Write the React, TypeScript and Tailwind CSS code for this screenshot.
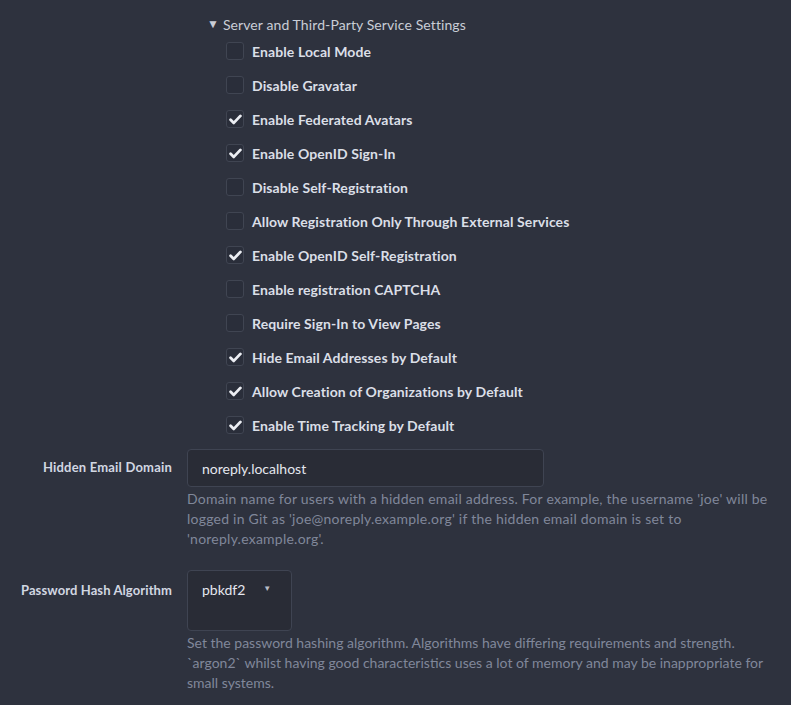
import React from "react";

const items: [string, boolean][] = [
  ["Enable Local Mode", false],
  ["Disable Gravatar", false],
  ["Enable Federated Avatars", true],
  ["Enable OpenID Sign-In", true],
  ["Disable Self-Registration", false],
  ["Allow Registration Only Through External Services", false],
  ["Enable OpenID Self-Registration", true],
  ["Enable registration CAPTCHA", false],
  ["Require Sign-In to View Pages", false],
  ["Hide Email Addresses by Default", true],
  ["Allow Creation of Organizations by Default", true],
  ["Enable Time Tracking by Default", true],
];

function Check({ on }: { on: boolean }) {
  return (
    <div className="w-[18px] h-[18px] rounded-[3px] border border-[#404552] bg-[#2a2e3a] flex items-center justify-center">
      {on && (
        <svg width="13" height="11" viewBox="0 0 13 11">
          <path d="M1.6 5.8 L4.8 8.9 L11.4 1.9" fill="none" stroke="#eceef3" strokeWidth="2.8" strokeLinecap="round" strokeLinejoin="round" />
        </svg>
      )}
    </div>
  );
}

export default function App() {
  return (
    <div
      className="w-[791px] h-[705px] bg-[#2e323e] overflow-hidden text-[#d2d6de]"
      style={{ fontFamily: "'Segoe UI', Lato, 'Noto Sans', sans-serif" }}
    >
      <div className="pl-[207px] pt-[15px]">
        <div className="flex items-center h-[18px] text-[14px] text-[#c9cdd6]">
          <span className="text-[12px] mr-[4px]">▼</span>
          <span className="tracking-[0.1px]">Server and Third-Party Service Settings</span>
        </div>
        <div className="pl-[19px] mt-[9px] flex flex-col gap-[16px]">
          {items.map(([t, on]) => (
            <div key={t} className="flex items-center h-[18px]">
              <Check on={on} />
              <span className="ml-[8px] text-[14px] font-bold tracking-[0.1px] text-[#dbdfe7]">{t}</span>
            </div>
          ))}
        </div>
      </div>

      <div className="flex mt-[15px]">
        <div className="w-[172px] shrink-0 text-right pt-[9px] text-[13px] font-bold tracking-[0.2px] text-[#d2d7e2]">
          Hidden Email Domain
        </div>
        <div className="ml-[15px] w-[600px]">
          <div className="w-[357px] h-[38px] rounded-[4px] border border-[#3f4452] bg-[#292c36] flex items-center pl-[14px] text-[14px] text-[#e4e7ee]">
            noreply.localhost
          </div>
          <div className="mt-[2px] text-[14px] leading-[20px] tracking-[0.24px] text-[#80879a]">
            Domain name for users with a hidden email address. For example, the username 'joe' will be logged in Git as 'joe@noreply.example.org' if the hidden email domain is set to 'noreply.example.org'.
          </div>
        </div>
      </div>

      <div className="flex mt-[21px]">
        <div className="w-[172px] shrink-0 text-right pt-[11px] text-[13px] font-bold tracking-[0.1px] text-[#d2d7e2]">
          Password Hash Algorithm
        </div>
        <div className="ml-[15px] w-[590px]">
          <div className="w-[105px] h-[61px] rounded-[4px] border border-[#3f4452] bg-[#292c36] flex items-start pt-[8px] pl-[14px] text-[14px] text-[#e4e7ee]">
            <span>pbkdf2</span>
            <span className="ml-[18px] text-[8px] mt-[3px] text-[#b8bcc6]">▼</span>
          </div>
          <div className="mt-[2px] text-[14px] leading-[20px] text-[#80879a]">
            Set the password hashing algorithm. Algorithms have differing requirements and strength. `argon2` whilst having good characteristics uses a lot of memory and may be inappropriate for small systems.
          </div>
        </div>
      </div>
    </div>
  );
}
